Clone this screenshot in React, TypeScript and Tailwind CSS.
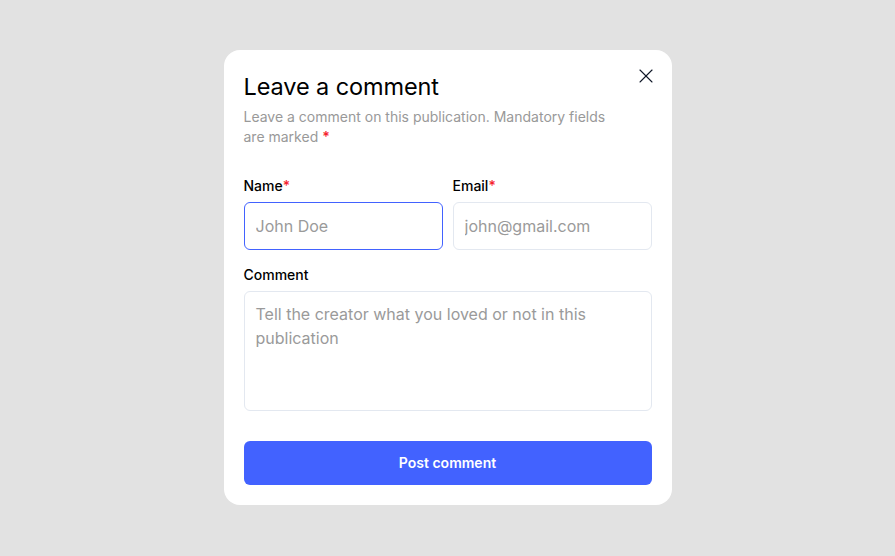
import { X } from "lucide-react";

const inputClassName =
  "w-full h-12 px-[11px] rounded-md border border-[#e3e8f0] bg-white text-base text-gray-900 placeholder:text-[#9a9a9a] outline-none";

export default function App() {
  return (
    <div
      className="min-h-[556px] w-full bg-[#e2e2e2] flex items-start justify-center pt-[50px]"
      style={{ fontFamily: "Inter, 'Noto Sans', sans-serif" }}
    >
      <div className="relative w-[448px] bg-white rounded-2xl px-5 pt-[21px] pb-[20px]">
        <button className="absolute left-[410px] top-[14px] w-6 h-6 flex items-center justify-center text-gray-900">
          <X className="w-6 h-6" strokeWidth={1.1} />
        </button>

        <h2 className="text-[23.5px] leading-8 font-normal tracking-[-0.1px] text-black">Leave a comment</h2>
        <p className="mt-1 max-w-[380px] text-sm leading-5 text-[#999999]">
          Leave a comment on this publication. Mandatory fields are marked{" "}
          <span className="text-[#f5222d] font-semibold">*</span>
        </p>

        <div className="mt-[29px] grid grid-cols-2 gap-[10px]">
          <label className="flex flex-col gap-[6px]">
            <span className="text-sm leading-5 font-medium text-black">
              Name<span className="text-[#f5222d]">*</span>
            </span>
            <input
              className={inputClassName + " !border-[#4262ff]"}
              placeholder="John Doe"
            />
          </label>
          <label className="flex flex-col gap-[6px]">
            <span className="text-sm leading-5 font-medium text-black">
              Email<span className="text-[#f5222d]">*</span>
            </span>
            <input className={inputClassName} placeholder="john@gmail.com" />
          </label>
        </div>

        <label className="mt-[15px] flex flex-col gap-[6px]">
          <span className="text-sm leading-5 font-medium text-black">Comment</span>
          <textarea
            className="w-full h-[120px] px-[11px] py-[10px] rounded-md border border-[#e3e8f0] text-base leading-6 placeholder:text-[#9a9a9a] outline-none resize-none"
            placeholder="Tell the creator what you loved or not in this publication"
          />
        </label>

        <button className="mt-[30px] w-full h-11 rounded-md bg-[#4262ff] text-white text-sm font-semibold">
          Post comment
        </button>
      </div>
    </div>
  );
}
